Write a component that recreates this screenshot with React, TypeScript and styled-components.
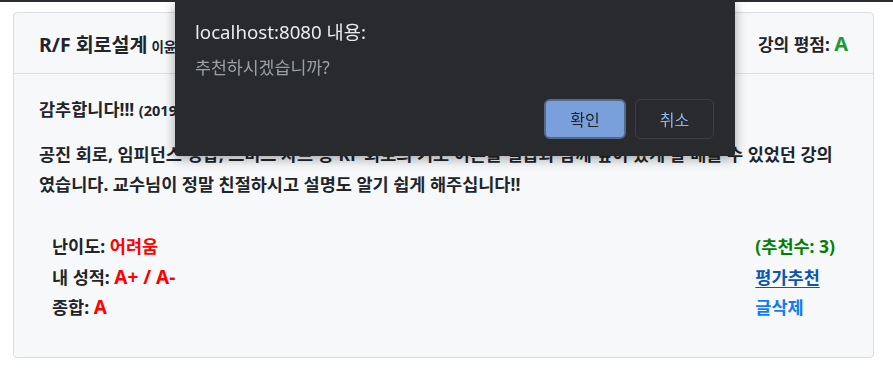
import * as React from 'react';
import styled, { createGlobalStyle } from 'styled-components';

const GlobalStyle = createGlobalStyle`
  html, body {
    margin: 0;
    padding: 0;
    background: #ffffff;
  }
  body {
    font-family: "Noto Sans", "Noto Sans CJK KR", sans-serif;
    color: #212529;
  }
`;

const TopEdge = styled.div`
  height: 2px;
  background: #2b2c2f;
`;

const Page = styled.main`
  padding: 10px 19px 0 13px;
`;

const Card = styled.section`
  background: #f7f8fa;
  border: 1px solid #dcdde0;
  border-radius: 4px;
  height: 346px;
  box-sizing: border-box;
`;

const CardHeader = styled.header`
  display: flex;
  align-items: center;
  justify-content: space-between;
  height: 60px;
  padding: 0 25px;
  border-bottom: 1px solid #dcdde0;
`;

const CourseTitle = styled.h2`
  margin: 0;
  font-size: 19.5px;
  font-weight: 700;
  white-space: nowrap;
`;

const Professor = styled.span`
  font-size: 13.5px;
  font-weight: 600;
  margin-left: 4px;
`;

const Rating = styled.div`
  font-size: 17px;
  font-weight: 700;
  white-space: nowrap;
`;

const Grade = styled.span<{ $color: string; $size?: number }>`
  color: ${(p) => p.$color};
  font-size: ${(p) => (p.$size ? `${p.$size}px` : 'inherit')};
  font-weight: 700;
`;

const CardBody = styled.div`
  padding: 20px 25px 0;
`;

const ReviewTitle = styled.h3`
  margin: 0;
  font-size: 17.5px;
  line-height: 30px;
  font-weight: 700;
`;

const Semester = styled.span`
  font-size: 14.5px;
`;

const ReviewText = styled.p`
  margin: 14px 0 0;
  font-size: 17.5px;
  line-height: 30px;
  font-weight: 700;
`;

const TextLine = styled.span`
  display: block;
  white-space: nowrap;
`;

const Stats = styled.div`
  display: flex;
  justify-content: space-between;
  margin-top: 32px;
  padding: 0 13px;
`;

const StatColumn = styled.div`
  display: flex;
  flex-direction: column;
`;

const StatLine = styled.div`
  font-size: 17.5px;
  line-height: 30.5px;
  font-weight: 700;
  white-space: nowrap;
`;

const Recommend = styled(StatLine)`
  color: #008000;
`;

const ActionLink = styled.a<{ $underline?: boolean }>`
  font-size: 17.5px;
  line-height: 30.5px;
  font-weight: 700;
  color: ${(p) => (p.$underline ? '#0a55b0' : '#0d7bf2')};
  text-decoration: ${(p) => (p.$underline ? 'underline' : 'none')};
  text-underline-offset: 3px;
  cursor: pointer;
`;

/* alert dialog lying over the page */
const Dialog = styled.div`
  position: fixed;
  top: 0;
  left: 175px;
  width: 560px;
  box-sizing: border-box;
  padding: 20px 21px 17px 20px;
  background: #292a2d;
  border-radius: 0 0 3px 3px;
  box-shadow: 0 3px 12px rgba(0, 0, 0, 0.35);
  font-family: "Noto Sans", "Noto Sans CJK KR", sans-serif;
`;

const DialogTitle = styled.div`
  color: #e8eaed;
  font-size: 18.7px;
  line-height: 24px;
`;

const DialogMessage = styled.div`
  margin-top: 14px;
  color: #9aa0a6;
  font-size: 17.3px;
  line-height: 20px;
`;

const DialogButtons = styled.div`
  display: flex;
  justify-content: flex-end;
  gap: 9px;
  margin-top: 21px;
`;

const DialogButton = styled.button<{ $primary?: boolean }>`
  height: 40px;
  box-sizing: border-box;
  border-radius: 6px;
  font-family: inherit;
  font-size: 16px;
  padding: 0;
  width: ${(p) => (p.$primary ? '82px' : '79px')};
  background: ${(p) => (p.$primary ? '#7aa0db' : 'transparent')};
  color: ${(p) => (p.$primary ? '#202124' : '#8ab4f8')};
  border: ${(p) => (p.$primary ? '2px solid #56698a' : '1px solid #3c3e42')};
`;

export default function App() {
  return (
    <>
      <GlobalStyle />
      <TopEdge />
      <Page>
        <Card>
          <CardHeader>
            <CourseTitle>
              R/F 회로설계<Professor>이윤호 교수님</Professor>
            </CourseTitle>
            <Rating>
              강의 평점: <Grade $color="#1c9a3a" $size={20}>A</Grade>
            </Rating>
          </CardHeader>
          <CardBody>
            <ReviewTitle>
              감추합니다!!! <Semester>(2019년 2학기)</Semester>
            </ReviewTitle>
            <ReviewText>
              <TextLine>
                공진 회로, 임피던스 정합, 스미스 차트 등 RF 회로의 기초 이론을 실습과 함께 깊이 있게 잘 배울 수 있었던 강의
              </TextLine>
              <TextLine>였습니다. 교수님이 정말 친절하시고 설명도 알기 쉽게 해주십니다!!</TextLine>
            </ReviewText>
            <Stats>
              <StatColumn>
                <StatLine>
                  난이도: <Grade $color="#ff0000">어려움</Grade>
                </StatLine>
                <StatLine>
                  내 성적: <Grade $color="#ff0000" $size={19}>A+ / A-</Grade>
                </StatLine>
                <StatLine>
                  종합: <Grade $color="#ff0000" $size={19}>A</Grade>
                </StatLine>
              </StatColumn>
              <StatColumn>
                <Recommend>(추천수: 3)</Recommend>
                <StatLine>
                  <ActionLink $underline>평가추천</ActionLink>
                </StatLine>
                <StatLine>
                  <ActionLink>글삭제</ActionLink>
                </StatLine>
              </StatColumn>
            </Stats>
          </CardBody>
        </Card>
      </Page>
      <Dialog role="alertdialog">
        <DialogTitle>localhost:8080 내용:</DialogTitle>
        <DialogMessage>추천하시겠습니까?</DialogMessage>
        <DialogButtons>
          <DialogButton $primary>확인</DialogButton>
          <DialogButton>취소</DialogButton>
        </DialogButtons>
      </Dialog>
    </>
  );
}
